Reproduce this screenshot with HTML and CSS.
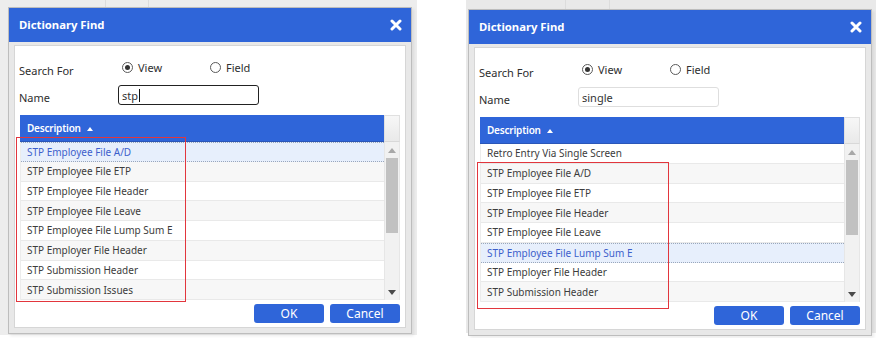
FILE: index.html
```html
<!DOCTYPE html>
<html>
<head>
<meta charset="utf-8">
<link rel="stylesheet" href="styles.css">
</head>
<body>
<div class="canvas">
  <section class="shot shot-left">
    <div class="dialog">
      <header class="dlg-title">
        <span class="dlg-name">Dictionary Find</span>
        <svg class="close" viewBox="0 0 12 12" width="12" height="12"><path d="M2 2 L10 10 M10 2 L2 10" stroke="#fff" stroke-width="3" stroke-linecap="round" fill="none"/></svg>
      </header>
      <div class="dlg-body">
        <div class="panel">
          <div class="form">
            <span class="lbl">Search For</span>
            <div class="radios">
              <span class="radio first"><span class="dot on"></span>View</span>
              <span class="radio"><span class="dot"></span>Field</span>
            </div>
            <span class="lbl">Name</span>
            <div class="input focus">stp<span class="caret"></span></div>
          </div>
          <div class="grid">
            <div class="grid-head">
              <div class="col-head">Description <svg class="sort" viewBox="0 0 6 4" width="6" height="4"><path d="M0 4 L3 0 L6 4 Z" fill="#fff"/></svg></div>
              <div class="sb-head"></div>
            </div>
            <div class="grid-main">
              <div class="rows">
                <div class="row sel">STP Employee File A/D</div>
                <div class="row">STP Employee File ETP</div>
                <div class="row">STP Employee File Header</div>
                <div class="row">STP Employee File Leave</div>
                <div class="row">STP Employee File Lump Sum E</div>
                <div class="row">STP Employer File Header</div>
                <div class="row">STP Submission Header</div>
                <div class="row">STP Submission Issues</div>
              </div>
              <div class="scrollbar">
                <svg class="arrow" viewBox="0 0 8 5" width="8" height="5"><path d="M0 5 L4 0 L8 5 Z" fill="#a8a8a8"/></svg>
                <div class="track"><div class="thumb"></div></div>
                <svg class="arrow" viewBox="0 0 8 5" width="8" height="5"><path d="M0 0 L4 5 L8 0 Z" fill="#4a4a4a"/></svg>
              </div>
            </div>
          </div>
          <div class="buttons">
            <button class="btn">OK</button>
            <button class="btn">Cancel</button>
          </div>
        </div>
      </div>
    </div>
    <div class="redbox redbox-left"></div>
  </section>

  <section class="shot shot-right">
    <div class="dialog">
      <header class="dlg-title">
        <span class="dlg-name">Dictionary Find</span>
        <svg class="close" viewBox="0 0 12 12" width="12" height="12"><path d="M2 2 L10 10 M10 2 L2 10" stroke="#fff" stroke-width="3" stroke-linecap="round" fill="none"/></svg>
      </header>
      <div class="dlg-body">
        <div class="panel">
          <div class="form">
            <span class="lbl">Search For</span>
            <div class="radios">
              <span class="radio first"><span class="dot on"></span>View</span>
              <span class="radio"><span class="dot"></span>Field</span>
            </div>
            <span class="lbl">Name</span>
            <div class="input">single</div>
          </div>
          <div class="grid">
            <div class="grid-head">
              <div class="col-head">Description <svg class="sort" viewBox="0 0 6 4" width="6" height="4"><path d="M0 4 L3 0 L6 4 Z" fill="#fff"/></svg></div>
              <div class="sb-head"></div>
            </div>
            <div class="grid-main">
              <div class="rows">
                <div class="row">Retro Entry Via Single Screen</div>
                <div class="row">STP Employee File A/D</div>
                <div class="row">STP Employee File ETP</div>
                <div class="row">STP Employee File Header</div>
                <div class="row">STP Employee File Leave</div>
                <div class="row sel">STP Employee File Lump Sum E</div>
                <div class="row">STP Employer File Header</div>
                <div class="row">STP Submission Header</div>
              </div>
              <div class="scrollbar">
                <svg class="arrow" viewBox="0 0 8 5" width="8" height="5"><path d="M0 5 L4 0 L8 5 Z" fill="#a8a8a8"/></svg>
                <div class="track"><div class="thumb"></div></div>
                <svg class="arrow" viewBox="0 0 8 5" width="8" height="5"><path d="M0 0 L4 5 L8 0 Z" fill="#4a4a4a"/></svg>
              </div>
            </div>
          </div>
          <div class="buttons">
            <button class="btn">OK</button>
            <button class="btn">Cancel</button>
          </div>
        </div>
      </div>
    </div>
    <div class="redbox redbox-right"></div>
  </section>
</div>
</body>
</html>
```

FILE: styles.css
```css
* { box-sizing: border-box; }

html, body {
  margin: 0;
  padding: 0;
  background: #ffffff;
  font-family: "Noto Sans", "Open Sans", sans-serif;
}

.canvas {
  display: flex;
  align-items: flex-start;
  width: 876px;
  height: 338px;
}

.shot {
  position: relative;
  background-color: #ededed;
  background-image:
    linear-gradient(#dcdcdc, #dcdcdc),
    linear-gradient(#dcdcdc, #dcdcdc);
  background-repeat: no-repeat;
  background-size: 1px 10px, 1px 10px;
}

.shot-left {
  width: 417px;
  height: 335px;
  padding: 7px 0 0 8px;
  background-position: 105px 0, 148px 0;
}

.shot-right {
  width: 410px;
  height: 333px;
  margin-left: 49px;
  padding: 9px 0 0 2px;
  background-color: #e9e9e9;
  background-position: 99px 0, 143px 0;
}

.dialog {
  width: 404px;
  border: 1px solid #bdbdbd;
  background: #e8e8e8;
  box-shadow: 2px 2px 3px rgba(0,0,0,0.08);
}

.dlg-title {
  height: 34px;
  background: #2f65d9;
  display: flex;
  align-items: center;
  justify-content: space-between;
  padding: 0 9px 2px 10px;
}

.dlg-name {
  color: #ffffff;
  font-weight: 700;
  font-size: 11.3px;
}

.close { display: block; margin-top: 1px; }

.dlg-body {
  padding: 3px 5px 5px;
}

.panel {
  background: #ffffff;
  border: 1px solid #d6d6d6;
  padding: 0 5px 4px;
}

.form {
  display: grid;
  grid-template-columns: 99px 1fr;
  grid-auto-rows: 20px;
  row-gap: 7px;
  padding: 12px 0 0 0;
  margin-left: -1px;
  font-size: 11px;
  color: #2e2e2e;
}

.lbl {
  padding-top: 3px;
  line-height: 20px;
}

.radios {
  display: flex;
  align-items: center;
  padding-left: 4px;
  margin-top: -2px;
}

.radio {
  display: flex;
  align-items: center;
  gap: 5px;
}

.radio.first { width: 88px; }

.dot {
  width: 11px;
  height: 11px;
  border: 1px solid #5a5a5a;
  border-radius: 50%;
  background: #fff;
  display: flex;
  align-items: center;
  justify-content: center;
}

.dot.on::after {
  content: "";
  width: 5px;
  height: 5px;
  border-radius: 50%;
  background: #333;
}

.input {
  width: 141px;
  height: 20px;
  border: 1px solid #dedede;
  border-radius: 3px;
  padding: 0 3px;
  line-height: 17px;
  display: flex;
  align-items: center;
  color: #333;
}

.input.focus { border-color: #222; }

.caret {
  display: inline-block;
  width: 1px;
  height: 13px;
  background: #111;
  margin-left: 1px;
}

.grid {
  margin-top: 10px;
  width: 380px;
}

.grid-head {
  display: flex;
  height: 27px;
}

.col-head {
  width: 364px;
  background: #2f65d9;
  border-bottom: 1px solid #2a56b8;
  color: #fff;
  font-size: 10px;
  font-weight: 600;
  letter-spacing: -0.2px;
  padding-left: 7px;
  display: flex;
  align-items: center;
  gap: 6px;
}

.sort { display: block; margin-top: 1px; }

.sb-head {
  width: 16px;
  background: linear-gradient(#f7f7f7, #e9e9e9);
  border: 1px solid #e0e0e0;
  border-bottom-color: #d8d8d8;
}

.grid-main {
  display: flex;
  height: 158px;
}

.rows {
  width: 364px;
  border-left: 1px solid #ececec;
}

.row {
  height: 19.75px;
  border-bottom: 1px solid #e9e9e9;
  font-size: 10px;
  color: #3c3c3c;
  padding-left: 6px;
  display: flex;
  align-items: center;
}

.row:nth-child(even) { background: #f7f7f7; }

.row.sel {
  background: #e7effc;
  color: #3d5fcb;
  border-top: 1px dotted #9aa7bb;
  border-bottom: 1px dotted #9aa7bb;
}

.scrollbar {
  width: 16px;
  background: #f1f1f1;
  border-left: 1px solid #e6e6e6;
  border-right: 1px solid #e6e6e6;
  display: flex;
  flex-direction: column;
  align-items: center;
  padding: 6px 0 5px;
}

.arrow { display: block; }

.track {
  flex: 1;
  width: 100%;
  padding: 5px 1px 0;
}

.thumb {
  height: 75px;
  background: #c1c1c1;
}

.buttons {
  display: flex;
  justify-content: flex-end;
  gap: 6px;
  margin-top: 4px;
  width: 380px;
}

.btn {
  width: 70px;
  height: 19px;
  border: none;
  border-radius: 3px;
  background: #2f65d9;
  color: #ffffff;
  font-family: "Noto Sans", "Open Sans", sans-serif;
  font-size: 12px;
  padding: 0;
  line-height: 19px;
}

.redbox {
  position: absolute;
  z-index: 5;
  border: 1px solid #e2363d;
}

.redbox-left {
  left: 16px;
  top: 137px;
  width: 170px;
  height: 165px;
}

.redbox-right {
  left: 11px;
  top: 162px;
  width: 192px;
  height: 147px;
}
```
